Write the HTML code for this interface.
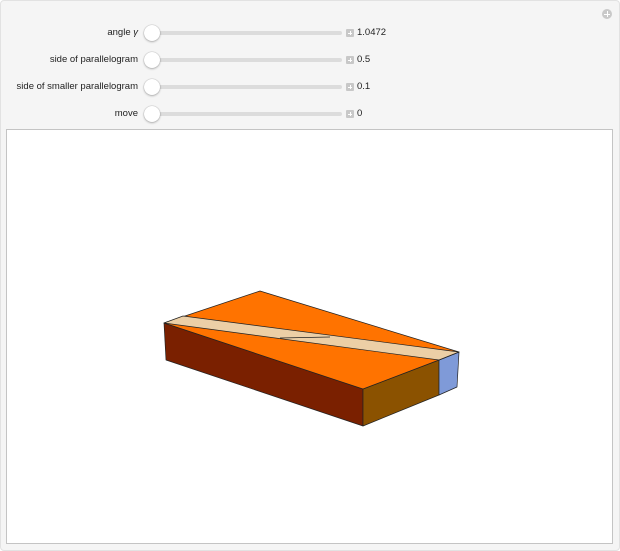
<!DOCTYPE html>
<html><head><style>
body{margin:0;width:620px;height:551px;background:#fff;font-family:"Liberation Sans",sans-serif;font-size:9.5px;color:#222;position:relative;overflow:hidden}
.panel{position:absolute;left:0;top:0;width:618px;height:549px;background:#f5f5f5;border:1px solid #e2e2e2;border-radius:4px}
.lab{position:absolute;right:482px;text-align:right;white-space:nowrap}
.track{position:absolute;left:152px;width:190px;height:4px;background:#dcdcdc;border-radius:2px}
.thumb{position:absolute;left:144px;width:16px;height:16px;border-radius:50%;background:#fff;box-shadow:0 0 1px #888,0 1px 2px rgba(0,0,0,.25)}
.pl{position:absolute;left:346px;width:8px;height:8px;background:#c8c8c8;border-radius:1px}
.pl:before{content:"";position:absolute;left:2px;top:3.5px;width:4px;height:1px;background:#fff}
.pl:after{content:"";position:absolute;left:3.5px;top:2px;width:1px;height:4px;background:#fff}
.val{position:absolute;left:357px}
.plot{position:absolute;left:6px;top:129px;width:605px;height:413px;background:#fff;border:1px solid #c4c4c4}
</style></head><body>
<div class="panel"></div>
<div style="position:absolute;left:602px;top:9px;width:10px;height:10px;border-radius:50%;background:#c9c9c9"></div>
<div style="position:absolute;left:604px;top:13.5px;width:6px;height:1px;background:#fff"></div>
<div style="position:absolute;left:606.5px;top:11px;width:1px;height:6px;background:#fff"></div>

<div class="lab" style="top:27px">angle <i>γ</i></div>
<div class="track" style="top:31px"></div><div class="thumb" style="top:25px"></div>
<div class="pl" style="top:29px"></div><div class="val" style="top:27px">1.0472</div>

<div class="lab" style="top:54px">side of parallelogram</div>
<div class="track" style="top:58px"></div><div class="thumb" style="top:52px"></div>
<div class="pl" style="top:56px"></div><div class="val" style="top:54px">0.5</div>

<div class="lab" style="top:81px">side of smaller parallelogram</div>
<div class="track" style="top:85px"></div><div class="thumb" style="top:79px"></div>
<div class="pl" style="top:83px"></div><div class="val" style="top:81px">0.1</div>

<div class="lab" style="top:108px">move</div>
<div class="track" style="top:112px"></div><div class="thumb" style="top:106px"></div>
<div class="pl" style="top:110px"></div><div class="val" style="top:108px">0</div>

<div class="plot"></div>
<svg style="position:absolute;left:0;top:0" width="620" height="551">
<g stroke="#222" stroke-width="0.7" stroke-linejoin="round">
<polygon points="164,323 363,389 363,426 166,360" fill="#7a2000"/>
<polygon points="363,389 439,360 439,395 363,426" fill="#8b5200"/>
<polygon points="439,360 459,352 457,387 439,395" fill="#7f9ad8"/>
<polygon points="164,323 260,291 459,352 439,360 363,389" fill="#ff7300"/>
<polygon points="164,323 183,316 459,352 439,360" fill="#eccfa6"/>
<line x1="280" y1="338" x2="330" y2="337"/>
</g>
</svg>
</body></html>
